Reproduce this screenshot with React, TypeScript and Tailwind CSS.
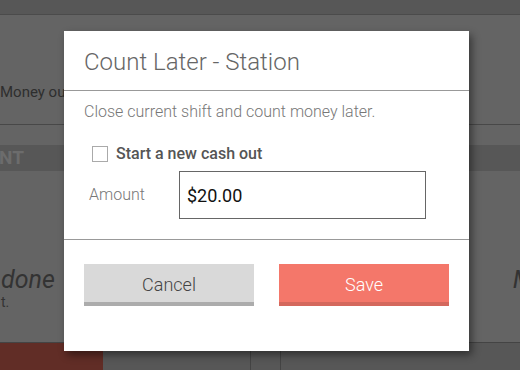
import React from 'react';

export default function App() {
  return (
    <div className="relative h-[370px] w-[520px] overflow-hidden bg-[#646464] font-['Roboto',sans-serif]">
      {/* dimmed page behind the dialog */}
      <div className="flex h-full flex-col">
        <div className="h-[15px] border-b border-[#4b4b4b] bg-[#575757]" />
        <div className="flex h-[110px] items-end border-b border-[#484848] pb-[24px]">
          <span className="text-[15px] leading-none text-[#2e2e2e]">Money out</span>
        </div>
        <div className="h-[20px]" />
        <div className="flex h-[26px] items-center bg-[#575757]">
          <span className="-ml-[1px] text-[19px] font-bold text-[#6c6c6c]">NT</span>
        </div>
        <div className="flex flex-1 items-start justify-between pt-[96px]">
          <div className="flex flex-col pl-[1px]">
            <span className="text-[25px] italic leading-none text-[#333]">done</span>
            <span className="mt-[3px] text-[14px] leading-none text-[#333]">t.</span>
          </div>
          <span className="-mr-[14px] text-[25px] italic leading-none text-[#333]">M</span>
        </div>
        <div className="flex h-[28px] border-t border-[#444] bg-[#575757]">
          <div className="w-[103px] bg-[#612d26]" />
          <div className="w-[148px] border-r border-[#444]" />
          <div className="w-[30px] border-r border-[#444]" />
        </div>
      </div>

      {/* dialog */}
      <div className="absolute left-[64px] top-[31px] flex h-[320px] w-[405px] flex-col bg-white shadow-[3px_4px_8px_rgba(0,0,0,0.45)]">
        <div className="flex h-[60px] items-center border-b border-[#999] px-[20px] pt-[2px]">
          <h2 className="text-[24px] font-light text-[#666]">Count Later - Station</h2>
        </div>
        <div className="flex h-[149px] flex-col border-b border-[#999] px-[20px] pt-[9px]">
          <p className="text-[16px] leading-[24px] font-light text-[#777]">Close current shift and count money later.</p>
          <label className="mt-[18px] flex h-[24px] items-center gap-[8px] pl-[8px]">
            <span className="h-[16px] w-[16px] border border-[#aaa] bg-white" />
            <span className="text-[16px] font-medium text-[#555]">Start a new cash out</span>
          </label>
          <div className="mt-[5px] flex items-center">
            <span className="w-[95px] pl-[5px] text-[16px] font-light text-[#777]">Amount</span>
            <div className="flex h-[48px] w-[247px] items-center border border-[#666] px-[7px] text-[18px] text-[#111]">
              $20.00
            </div>
          </div>
        </div>
        <div className="flex justify-between px-[20px] pt-[24px]">
          <button className="h-[42px] w-[170px] border-b-[4px] border-[#acacac] bg-[#d9d9d9] pt-[3px] text-[18px] font-light text-[#444]">
            Cancel
          </button>
          <button className="h-[42px] w-[170px] border-b-[4px] border-[#d4685d] bg-[#f4776a] pt-[3px] text-[18px] font-light text-white">
            Save
          </button>
        </div>
      </div>
    </div>
  );
}
